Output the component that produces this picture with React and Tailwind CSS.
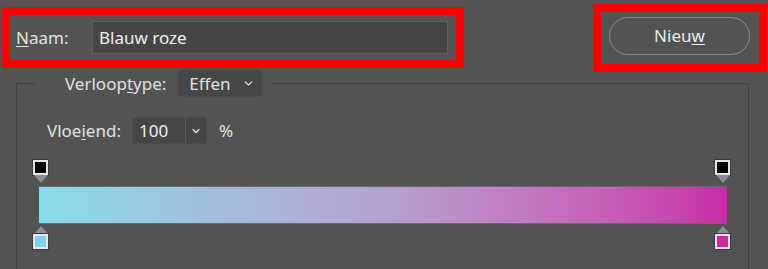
import { ChevronDown } from "lucide-react";

function Stop({ color, up }) {
  const tri = up ? (
    <div className="w-0 h-0 mx-auto border-x-[7px] border-x-transparent border-b-[8px] border-b-[#8c8c8c]" />
  ) : (
    <div className="w-0 h-0 mx-auto border-x-[7px] border-x-transparent border-t-[8px] border-t-[#8c8c8c]" />
  );
  return (
    <div className="flex flex-col w-[15px]">
      {up && tri}
      <div className={`w-[15px] h-[15px] border-2 border-[#e6e6e6] outline outline-1 outline-[#3c3c3c] ${color}`} />
      {!up && tri}
    </div>
  );
}

export default function App() {
  return (
    <main
      className="w-[768px] h-[269px] overflow-hidden bg-[#535353] text-[#e2e2e2]"
      style={{ fontFamily: '"Noto Sans", "Open Sans", sans-serif' }}
    >
      <div className="flex items-start h-[70px]">
        <div className="ml-[2px] mt-[7px] w-[462px] h-[61px] border-[8px] border-[#ff0000] flex items-center">
          <span className="ml-[6px] text-[17px]">
            <span className="underline underline-offset-2">N</span>aam:
          </span>
          <div className="ml-auto mr-[8px] w-[356px] h-[33px] bg-[#454545] border border-[#5f5f5f] flex items-center px-[6px] text-[17px] text-[#f0f0f0]">
            Blauw roze
          </div>
        </div>
        <div className="ml-auto mr-[1px] mt-[4px] w-[174px] h-[68px] border-[8px] border-[#ff0000] pt-[5px] pl-[8px]">
          <button className="w-[141px] h-[38px] rounded-full border border-[#8a8a8a] text-[17px] text-[#ececec]">
            Nieu<span className="underline underline-offset-2">w</span>
          </button>
        </div>
      </div>

      <fieldset className="ml-[16px] w-[733px] h-[220px] border border-[#414141] p-0 pl-[30px]">
        <legend className="ml-[-12px] flex items-center pl-[30px] pr-[10px] text-[17px]">
          <span>
            Verloop<span className="underline underline-offset-2">t</span>ype:
          </span>
          <div className="ml-[12px] w-[84px] h-[27px] bg-[#464646] border border-[#4c4c4c] rounded-[3px] flex items-center pl-[10px] pr-[6px]">
            <span>Effen</span>
            <ChevronDown className="ml-auto w-[13px] h-[13px]" strokeWidth={2.5} />
          </div>
        </legend>

        <div className="mt-[20px] flex items-center text-[17px]">
          <span>
            Vloe<span className="underline underline-offset-2">i</span>end:
          </span>
          <div className="ml-[11px] h-[27px] flex border border-[#4c4c4c] bg-[#464646] rounded-[2px]">
            <div className="w-[52px] flex items-center pl-[6px] text-[#f0f0f0]">100</div>
            <div className="w-[21px] border-l border-[#5a5a5a] flex items-center justify-center">
              <ChevronDown className="w-[12px] h-[12px]" strokeWidth={2.5} />
            </div>
          </div>
          <span className="ml-[12px]">%</span>
        </div>

        <div className="mt-[16px] ml-[-14px] w-[697px]">
          <div className="flex justify-between">
            <Stop color="bg-black" />
            <Stop color="bg-black" />
          </div>
          <div className="mt-[3px] ml-[6px] mr-[3px] h-[38px] bg-gradient-to-r from-[#85dbea] via-[#b4a2d3] to-[#c82aa7] border-y border-[#6a6a6a]" />
          <div className="mt-[2px] flex justify-between">
            <Stop color="bg-[#7fd4ea]" up />
            <Stop color="bg-[#c82aa6]" up />
          </div>
        </div>
      </fieldset>
    </main>
  );
}
